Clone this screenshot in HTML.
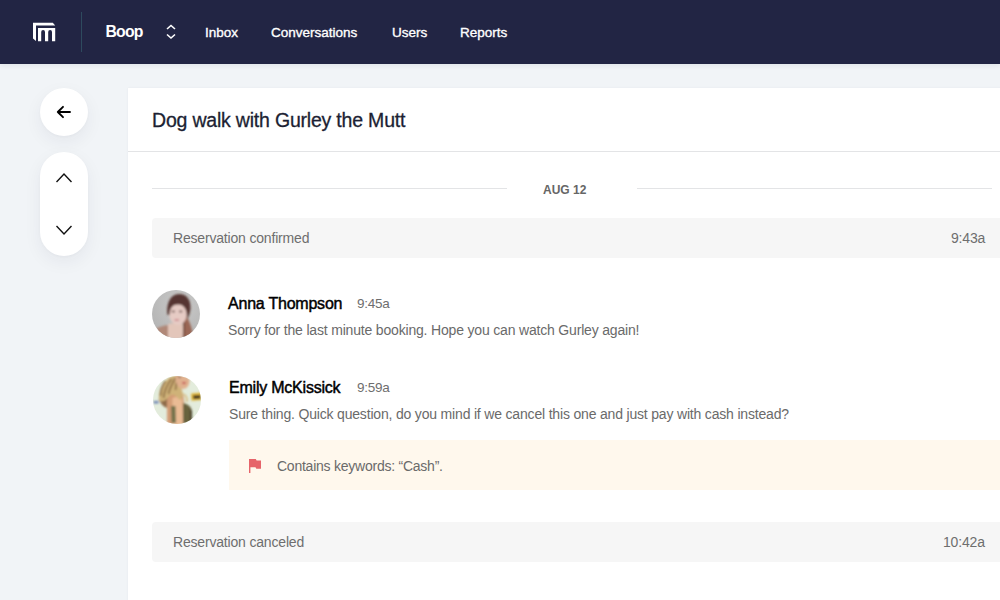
<!DOCTYPE html>
<html><head><meta charset="utf-8">
<style>
*{margin:0;padding:0;box-sizing:border-box}
html,body{width:1000px;height:600px;overflow:hidden}
body{background:#f1f4f7;font-family:"Liberation Sans",sans-serif;position:relative}
.abs{position:absolute;white-space:nowrap}
.nav{position:absolute;left:0;top:0;width:1000px;height:64px;background:#222544;box-shadow:0 2px 5px rgba(20,30,60,0.07)}
.sep{position:absolute;left:81px;top:12px;width:1px;height:40px;background:#2e4a5e}
.navt{position:absolute;color:#fff;font-size:13.5px;top:25px;line-height:16px;font-weight:normal;letter-spacing:0px;-webkit-text-stroke:0.35px #fff}
.circle{position:absolute;background:#fff;box-shadow:0 6px 18px rgba(30,40,70,0.06),0 1px 3px rgba(30,40,70,0.03)}
.panel{position:absolute;left:128px;top:88px;width:900px;height:560px;background:#fff;box-shadow:0 0 2px rgba(40,50,70,0.06)}
.hdrline{position:absolute;left:128px;top:151px;width:872px;height:1px;background:#e3e4e6}
.rule{position:absolute;top:188px;height:1px;background:#e3e4e6}
.ev{position:absolute;left:152px;width:900px;height:40px;background:#f6f6f6;border-radius:4px}
.evt{position:absolute;font-size:14px;color:#6e6e6e;line-height:16px;letter-spacing:-0.18px}
.name{position:absolute;font-size:16px;color:#000;font-weight:normal;line-height:18px;letter-spacing:-0.22px;-webkit-text-stroke:0.45px #000}
.time{position:absolute;font-size:13.5px;color:#6e6e6e;line-height:16px;letter-spacing:-0.25px}
.msg{position:absolute;font-size:14px;color:#6a6a6a;line-height:16px;letter-spacing:-0.18px}
</style></head>
<body>
<div class="nav"></div>
<!-- logo -->
<svg class="abs" style="left:0;top:0" width="70" height="64" viewBox="0 0 70 64">
  <path d="M33 22.8 H52.8 L55.2 25.6 H36 V41 L33 38.6 Z" fill="#fff"/>
  <path d="M38 28 H55.2 V41.2 H52 V32 A1.9 1.9 0 0 0 48.2 32 V41.2 H45 V32 A1.9 1.9 0 0 0 41.2 32 V41.2 H38 Z" fill="#fff"/>
</svg>
<div class="sep"></div>
<div class="navt" style="left:105.5px;font-size:15.8px;top:24px;letter-spacing:-0.8px;font-weight:bold;-webkit-text-stroke:0px">Boop</div>
<svg class="abs" style="left:165px;top:24px" width="12" height="16" viewBox="0 0 12 16">
  <path d="M2 5 L6 1.5 L10 5" stroke="#fff" stroke-width="1.6" fill="none"/>
  <path d="M2 10.5 L6 14 L10 10.5" stroke="#fff" stroke-width="1.6" fill="none"/>
</svg>
<div class="navt" style="left:205px">Inbox</div>
<div class="navt" style="left:271px">Conversations</div>
<div class="navt" style="left:392px">Users</div>
<div class="navt" style="left:460px">Reports</div>

<!-- side buttons -->
<div class="circle" style="left:40px;top:88px;width:48px;height:48px;border-radius:24px"></div>
<svg class="abs" style="left:56px;top:104px" width="16" height="16" viewBox="0 0 16 16">
  <path d="M14 8 H1.8 M7 2.8 L1.8 8 L7 13.2" stroke="#000" stroke-width="1.9" stroke-linecap="round" stroke-linejoin="round" fill="none"/>
</svg>
<div class="circle" style="left:40px;top:152px;width:48px;height:104px;border-radius:24px"></div>
<svg class="abs" style="left:56px;top:170px" width="16" height="16" viewBox="0 0 16 16">
  <path d="M0.5 12 L8 4 L15.5 12" stroke="#111" stroke-width="1.4" fill="none"/>
</svg>
<svg class="abs" style="left:56px;top:222px" width="16" height="16" viewBox="0 0 16 16">
  <path d="M0.5 4 L8 12 L15.5 4" stroke="#111" stroke-width="1.4" fill="none"/>
</svg>

<!-- panel -->
<div class="panel"></div>
<div class="hdrline"></div>
<div class="abs" style="left:152px;top:109px;font-size:19.5px;color:#1c1f33;line-height:22px;letter-spacing:-0.2px;-webkit-text-stroke:0.3px #1c1f33">Dog walk with Gurley the Mutt</div>

<div class="rule" style="left:152px;width:355px"></div>
<div class="rule" style="left:637px;width:355px"></div>
<div class="abs" style="left:543px;top:183px;font-size:12px;font-weight:bold;color:#666;letter-spacing:0px;line-height:14px">AUG 12</div>

<div class="ev" style="top:218px"></div>
<div class="evt" style="left:173px;top:230px">Reservation confirmed</div>
<div class="evt" style="left:951px;top:230px">9:43a</div>

<!-- Anna -->
<svg class="abs" style="left:152px;top:290px" width="48" height="48" viewBox="0 0 48 48">
  <defs>
    <clipPath id="c1"><circle cx="24" cy="24" r="24"/></clipPath>
    <filter id="b1" x="-20%" y="-20%" width="140%" height="140%"><feGaussianBlur stdDeviation="1"/></filter>
    <radialGradient id="g1" cx="0.6" cy="0.3" r="0.8"><stop offset="0" stop-color="#cacac9"/><stop offset="1" stop-color="#b2b2b2"/></radialGradient>
  </defs>
  <g clip-path="url(#c1)">
    <rect width="48" height="48" fill="url(#g1)"/>
    <g filter="url(#b1)">
      <path d="M2 40 C8 36 14 35 19 35 L20 50 L0 50 Z" fill="#b08878"/>
      <path d="M16 34 C20 33 28 33 32 35 L33 50 L16 50 Z" fill="#e3c6ba"/>
      <path d="M31 20 C34 24 38 32 40 40 C41 45 40 50 38 50 L31 50 C31 42 31 30 31 20 Z" fill="#9a6654"/>
      <path d="M31 22 C32 30 32 40 31.5 50" stroke="#6a4234" stroke-width="1.5" fill="none"/>
      <path d="M17 22 C17 14 20 12 26 12 C32 12 35 15 35 22 C35 30 31 35 26 35 C21 35 17 30 17 22 Z" fill="#e6cbc4"/>
      <path d="M15.5 25 C14 14 18 4 27 4 C35 4 39 10 38.5 19 C38 23 37 26 35 29 C35 22 34 15.5 27 14.5 C21 14 18 17 17.5 25 Z" fill="#563630"/>
      <ellipse cx="21.3" cy="21.5" rx="1.9" ry="0.9" fill="#7a625e"/>
      <ellipse cx="28.7" cy="21.5" rx="1.9" ry="0.9" fill="#7a625e"/>
      <ellipse cx="24.8" cy="30" rx="2.6" ry="1" fill="#cf8e92"/>
    </g>
  </g>
</svg>
<div class="name" style="left:228px;top:295px">Anna Thompson</div>
<div class="time" style="left:357px;top:296px">9:45a</div>
<div class="msg" style="left:228px;top:322px">Sorry for the last minute booking. Hope you can watch Gurley again!</div>

<!-- Emily -->
<svg class="abs" style="left:152px;top:376px" width="49" height="48" viewBox="0 0 48 48">
  <defs>
    <clipPath id="c2"><circle cx="24.5" cy="24" r="24"/></clipPath>
    <filter id="b2" x="-20%" y="-20%" width="140%" height="140%"><feGaussianBlur stdDeviation="1.1"/></filter>
  </defs>
  <g clip-path="url(#c2)">
    <rect x="-2" width="52" height="48" fill="#e3ecdc"/>
    <g filter="url(#b2)">
      <path d="M38.5 17.5 L49 16.5 L49 24 L39 24.8 Z" fill="#e2b63a"/>
      <path d="M40.5 19.5 L48 19 L48 22.5 L41 23 Z" fill="#3e3422"/>
      <path d="M1 25 L6 25 L6 27.5 L1 27.5 Z" fill="#7084b4"/>
      <path d="M6 23 C9 29 12 32 16 32 L16 21 Z" fill="#8e6a4a"/>
      <path d="M15 20 C18 13 25 13 30 17 C32 22 32 32 31 50 L14.5 50 L14.5 26 Z" fill="#d39c76"/>
      <path d="M20 22 C24 20 28 21 30 24 L30.5 50 L20 50 Z" fill="#eabb94"/>
      <path d="M18.5 30 L23 30 L23.5 47 L19 47 Z" fill="#75724c"/>
      <path d="M30.5 27 C35 28 38 30 39 34 L39 47 L30.5 48 Z" fill="#67623e"/>
      <path d="M37.5 32 L39.5 35 L39.5 46 L37.5 46 Z" fill="#463c2c"/>
      <path d="M7 25 C5 17 9 8 16 2 C20 -1 26 -2 30 -1 C29 5 28 11 30 16 C31 20 29 23 27 24 C24 19 19 17 16 21 C14 24 11 26 7 25 Z" fill="#cfb278"/>
      <path d="M11 22 C12 14 15 8 19 3 M16 18 C17 12 20 7 23 2 M23 14 C23 9 24 5 26 1 M8 20 C8 14 10 9 13 5" stroke="#86643e" stroke-width="1.5" fill="none"/>
      <path d="M31 18 C34 20 35 23 34 26" stroke="#d8c08a" stroke-width="2" fill="none"/>
      <path d="M23 -1 C28 -2 36 -1 37 4 C37 10 34 13 30 13 C26 12 24 9 23 4 Z" fill="#e0b08e"/>
      <ellipse cx="27" cy="1" rx="1.5" ry="0.8" fill="#6a4a3a"/>
      <ellipse cx="31.5" cy="7" rx="1.8" ry="0.9" fill="#c2404c"/>
    </g>
  </g>
</svg>
<div class="name" style="left:229px;top:379px">Emily McKissick</div>
<div class="time" style="left:357px;top:380px">9:59a</div>
<div class="msg" style="left:229px;top:406px">Sure thing. Quick question, do you mind if we cancel this one and just pay with cash instead?</div>

<div class="abs" style="left:229px;top:440px;width:800px;height:50px;background:#fff8ed"></div>
<svg class="abs" style="left:247px;top:458px" width="16" height="16" viewBox="0 0 16 16">
  <path d="M2 1 H8.8 L9.6 2.5 H14 V10.8 H9.3 L8.5 9.2 H3.4 V15 H2 Z" fill="#e6646a"/>
</svg>
<div class="msg" style="left:277px;top:458px;letter-spacing:-0.24px">Contains keywords: “Cash”.</div>

<div class="ev" style="top:522px"></div>
<div class="evt" style="left:173px;top:534px">Reservation canceled</div>
<div class="evt" style="left:943px;top:534px">10:42a</div>
</body></html>
